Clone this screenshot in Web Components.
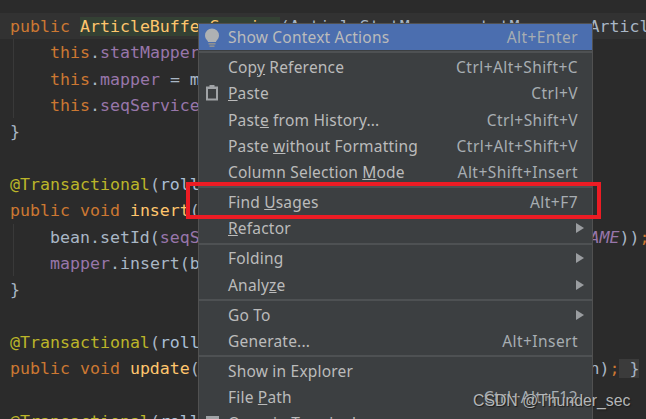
<!DOCTYPE html>
<html>
<head>
<meta charset="utf-8">
<title>Context menu</title>
<style>
html, body { margin: 0; padding: 0; background: #2b2b2b; }
.k { color: #cc7832; }
.m { color: #ffc66d; }
.f { color: #9876aa; }
.a { color: #bbb529; }
.c { color: #9876aa; font-style: italic; }
.p { color: #a9bfd6; }
.sel { background: #344134; }
.fold { background: #3b3b3b; }
</style>
</head>
<body>
<ide-window>
<code-editor>
<code-line current><span class="k">public </span><span class="m sel">ArticleBufferService</span>(ArticleStatMapper statMapper, Article</code-line>
<code-line guide>    <span class="k">this</span>.<span class="f">statMapper</span></code-line>
<code-line guide>    <span class="k">this</span>.<span class="f">mapper</span> = m</code-line>
<code-line guide>    <span class="k">this</span>.<span class="f">seqService</span></code-line>
<code-line>}</code-line>
<code-line></code-line>
<code-line><span class="a">@Transactional</span>(<span class="p">roll</span></code-line>
<code-line><span class="k">public void </span><span class="m">insert</span>(</code-line>
<code-line guide>    bean.setId(<span class="f">seqService</span>.nextId(ArticleBufferBean.<span class="c">TABLE_NAME</span>))<span class="k">;</span></code-line>
<code-line guide>    <span class="f">mapper</span>.insert(b</code-line>
<code-line>}</code-line>
<code-line></code-line>
<code-line><span class="a">@Transactional</span>(<span class="p">roll</span></code-line>
<code-line><span class="k">public void </span><span class="m">update</span>(ArticleBuffer bean, DbSession sqlSession)<span class="k">;</span><span class="fold"> }</span></code-line>
<code-line></code-line>
<code-line><span class="a">@Transactional</span>(<span class="p">roll</span></code-line>
</code-editor>

<context-menu>
<menu-item selected shortcut="Alt+Enter"><menu-icon slot="icon" name="bulb"></menu-icon>Show Context Actions</menu-item>
<menu-sep></menu-sep>
<menu-item shortcut="Ctrl+Alt+Shift+C">Cop<u>y</u> Reference</menu-item>
<menu-item shortcut="Ctrl+V"><menu-icon slot="icon" name="paste"></menu-icon><u>P</u>aste</menu-item>
<menu-item shortcut="Ctrl+Shift+V">Past<u>e</u> from History...</menu-item>
<menu-item shortcut="Ctrl+Alt+Shift+V">Paste <u>w</u>ithout Formatting</menu-item>
<menu-item shortcut="Alt+Shift+Insert">Column Selection <u>M</u>ode</menu-item>
<menu-sep></menu-sep>
<menu-item shortcut="Alt+F7">Find <u>U</u>sages</menu-item>
<menu-item submenu><u>R</u>efactor</menu-item>
<menu-sep></menu-sep>
<menu-item submenu>Folding</menu-item>
<menu-item submenu>Analy<u>z</u>e</menu-item>
<menu-sep></menu-sep>
<menu-item submenu>Go To</menu-item>
<menu-item shortcut="Alt+Insert">Generate...</menu-item>
<menu-sep></menu-sep>
<menu-item>Show in Explorer</menu-item>
<menu-item shortcut="Ctrl+Alt+F12">File <u>P</u>ath</menu-item>
<menu-item><menu-icon slot="icon" name="terminal"></menu-icon>Open in Terminal</menu-item>
</context-menu>

<mark-box></mark-box>
<water-mark>CSDN @Thunder_sec</water-mark>
</ide-window>

<script>
function stamp(host, html) {
    host.attachShadow({mode: 'open'});
    const t = document.createElement('template');
    t.innerHTML = html;
    host.shadowRoot.appendChild(t.content.cloneNode(true));
}

window.customElements.define('ide-window',
    class extends HTMLElement {
        __template = `
        <style>
        :host {
            display: block;
            position: relative;
            width: 646px;
            height: 419px;
            overflow: hidden;
            background: #2b2b2b;
        }
        </style>
        <slot></slot>`;
        constructor() {
            super();
            stamp(this, this.__template);
        }
    }
);

window.customElements.define('code-editor',
    class extends HTMLElement {
        __template = `
        <style>
        :host {
            display: block;
            padding-top: 13px;
            color: #a9b7c6;
            font-family: "DejaVu Sans Mono", "Liberation Mono", monospace;
            font-size: 16.6px;
        }
        </style>
        <slot></slot>`;
        constructor() {
            super();
            stamp(this, this.__template);
        }
    }
);

window.customElements.define('code-line',
    class extends HTMLElement {
        __template = `
        <style>
        :host {
            display: block;
            box-sizing: border-box;
            height: 26.33px;
            padding: 1px 0 0 10px;
            line-height: 25.33px;
        }
        slot { white-space: pre; }
        :host([current]) { background: #323232; }
        /* indent guide */
        :host([guide]) {
            background: linear-gradient(#393939, #393939) 13px 0 / 1px 100% no-repeat;
        }
        </style>
        <slot></slot>`;
        constructor() {
            super();
            stamp(this, this.__template);
        }
    }
);

window.customElements.define('context-menu',
    class extends HTMLElement {
        __template = `
        <style>
        :host {
            display: block;
            position: absolute;
            left: 198px;
            top: 23px;
            width: 393px;
            height: 420px;
            border: 1px solid #515151;
            border-bottom: 0;
            background: #3c3f41;
            color: #bbbbbb;
            font-family: "Noto Sans", "Open Sans", sans-serif;
            font-size: 15.5px;
            letter-spacing: .2px;
        }
        </style>
        <slot></slot>`;
        constructor() {
            super();
            stamp(this, this.__template);
        }
    }
);

window.customElements.define('menu-item',
    class extends HTMLElement {
        __template = `
        <style>
        :host {
            display: flex;
            align-items: center;
            height: 26.25px;
            white-space: nowrap;
        }
        :host([selected]) { background: #4b6eaf; }
        #icon {
            display: flex;
            align-items: center;
            box-sizing: border-box;
            width: 29px;
            padding-left: 6px;
            flex: none;
        }
        #label { flex: 1; }
        #shortcut { margin-right: 14px; color: #a7adb2; letter-spacing: .45px; }
        #arrow {
            display: none;
            width: 0;
            height: 0;
            margin-right: 8px;
            border-style: solid;
            border-width: 5px 0 5px 8px;
            border-color: transparent transparent transparent #9a9da0;
        }
        :host([submenu]) #arrow { display: block; }
        </style>
        <div id="icon"><slot name="icon"></slot></div>
        <div id="label"><slot></slot></div>
        <div id="shortcut"></div>
        <div id="arrow"></div>`;
        constructor() {
            super();
            stamp(this, this.__template);
            this.shadowRoot.getElementById('shortcut').textContent = this.getAttribute('shortcut') || '';
        }
    }
);

window.customElements.define('menu-sep',
    class extends HTMLElement {
        __template = `
        <style>
        :host {
            display: block;
            height: 2px;
            margin: 1px 0 .75px;
            background: #4e5153;
        }
        </style>`;
        constructor() {
            super();
            stamp(this, this.__template);
        }
    }
);

window.customElements.define('menu-icon',
    class extends HTMLElement {
        __icons = {
            bulb: `<path d="M7 0.5a7 7 0 0 1 7 7c0 2.4-1.3 3.8-2.3 5-.5.6-.7 1-.7 1.5H3c0-.5-.2-.9-.7-1.5-1-1.2-2.3-2.6-2.3-5a7 7 0 0 1 7-7z" fill="#aeb1b3"/>
                   <rect x="3.5" y="15" width="7" height="1.6" fill="#8d9093"/><rect x="4.5" y="17.4" width="5" height="1.6" fill="#8d9093"/>`,
            paste: `<path d="M1 2.5h3.5V1h5v1.5H13v14H1z" fill="#a0a3a6"/><rect x="3" y="5" width="8" height="9.5" fill="#3c3f41"/>`,
            terminal: `<rect x="1" y="2" width="13" height="14" fill="#a0a3a6"/>`
        };
        constructor() {
            super();
            const shape = this.__icons[this.getAttribute('name')] || '';
            stamp(this, `
            <style>:host { display: block; width: 14px; height: 19px; }
            svg { display: block; }</style>
            <svg width="14" height="19" viewBox="0 0 14 19">${shape}</svg>`);
        }
    }
);

window.customElements.define('mark-box',
    class extends HTMLElement {
        __template = `
        <style>
        /* red annotation drawn on top of the screenshot */
        :host {
            display: block;
            position: absolute;
            left: 186px;
            top: 182px;
            width: 407px;
            height: 29px;
            border: 4px solid #ed1c24;
        }
        </style>`;
        constructor() {
            super();
            stamp(this, this.__template);
        }
    }
);

window.customElements.define('water-mark',
    class extends HTMLElement {
        __template = `
        <style>
        :host {
            display: block;
            position: absolute;
            left: 473px;
            top: 391px;
            color: #b4b6b7;
            font-family: "Liberation Sans", sans-serif;
            font-size: 15.8px;
            line-height: 20px;
            text-shadow: 1px 1px 1px #1c1c1c;
        }
        </style>
        <slot></slot>`;
        constructor() {
            super();
            stamp(this, this.__template);
        }
    }
);
</script>
</body>
</html>
